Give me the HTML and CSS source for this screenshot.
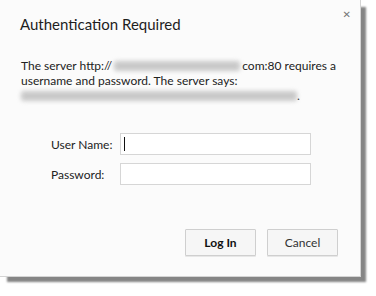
FILE: index.html
```html
<!DOCTYPE html>
<html lang="en">
<head>
    <meta charset="UTF-8">
    <title>Authentication Required</title>
    <link rel="stylesheet" href="styles.css">
</head>
<body>
    <div class="dialog">
        <button class="close-button">&#x2715;</button>
        <h1>Authentication Required</h1>
        <p class="message">
            The server http://<span class="blur blur-host"></span>com:80 requires a<br>
            username and password. The server says:<br>
            <span class="blur blur-realm"></span>.
        </p>
        <div class="form">
            <div class="row">
                <label>User Name:</label>
                <div class="field"><span class="caret"></span></div>
            </div>
            <div class="row">
                <label>Password:</label>
                <div class="field"></div>
            </div>
        </div>
        <div class="buttons">
            <button class="btn btn-primary">Log In</button>
            <button class="btn">Cancel</button>
        </div>
    </div>
    <!-- page behind the dialog -->
    <div class="behind">
        <span class="mark mark-a"></span>
        <span class="mark mark-b"></span>
        <span class="behind-text">LIKI</span>
    </div>
</body>
</html>
```

FILE: styles.css
```css
body {
    margin: 0;
    background: #ffffff;
    font-family: 'Lato', 'Noto Sans', sans-serif;
    color: #222;
}
.dialog {
    position: relative;
    z-index: 1;
    box-sizing: border-box;
    width: 361px;
    height: 277px;
    background: #fbfbfb;
    border: 1px solid #d4d4d4;
    border-top: none;
    border-left: none;
    box-shadow: 6px 6px 2px -1px #858585;
    padding: 14px 20px 0 20px;
    display: flex;
    flex-direction: column;
}
.close-button {
    position: absolute;
    top: 9px;
    right: 9px;
    border: none;
    background: none;
    color: #777;
    font-size: 10px;
    font-weight: bold;
    padding: 0;
    font-family: 'DejaVu Sans', sans-serif;
}
h1 {
    margin: 0;
    font-size: 15px;
    line-height: 20px;
    font-weight: normal;
    color: #1e1e1e;
}
.message {
    margin: 24px 0 0 1px;
    font-size: 12px;
    line-height: 15px;
    color: #222;
    white-space: nowrap;
}
.blur {
    display: inline-block;
    height: 10px;
    vertical-align: -1px;
    background: #c9c9c9;
    filter: blur(2px);
    border-radius: 3px;
}
.blur-host {
    width: 126px;
    margin: 0 2px 0 2px;
}
.blur-realm {
    width: 276px;
}
.form {
    margin: 30px 0 0 31px;
    display: flex;
    flex-direction: column;
    gap: 8px;
}
.row {
    display: flex;
    align-items: center;
}
.row label {
    width: 69px;
    font-size: 12px;
    color: #222;
}
.field {
    box-sizing: border-box;
    width: 191px;
    height: 22px;
    background: #fff;
    border: 1px solid #d6d6d6;
    display: flex;
    align-items: center;
    padding-left: 3px;
}
.caret {
    width: 1px;
    height: 14px;
    background: #111;
}
.buttons {
    margin-top: 44px;
    display: flex;
    justify-content: flex-end;
    gap: 11px;
    padding-right: 2px;
}
.btn {
    box-sizing: border-box;
    width: 71px;
    height: 27px;
    background: #f6f6f6;
    border: 1px solid #cfcfcf;
    border-radius: 1px;
    font-family: 'Lato', 'Noto Sans', sans-serif;
    font-size: 12px;
    color: #333;
    box-shadow: 0 1px 0 rgba(0, 0, 0, 0.08);
}
.btn-primary {
    font-weight: bold;
    color: #111;
}
.behind {
    position: relative;
    height: 19px;
    margin-top: -2px;
}
.mark {
    position: absolute;
    top: 0;
    height: 5px;
    background: #2a4fb0;
}
.mark-a {
    left: 204px;
    width: 8px;
}
.mark-b {
    left: 243px;
    width: 4px;
}
.behind-text {
    position: absolute;
    left: 257px;
    top: -5px;
    font-size: 9px;
    color: #aaa;
}
```
